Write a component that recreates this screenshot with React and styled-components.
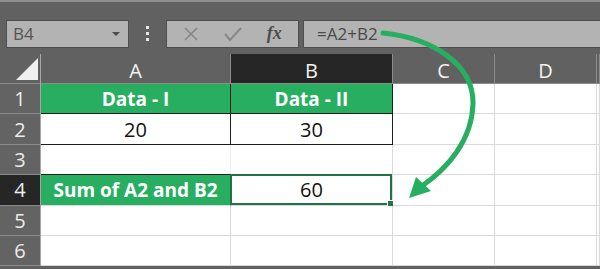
import React from 'react';
import styled, { createGlobalStyle } from 'styled-components';

const GlobalStyle = createGlobalStyle`
  html, body {
    margin: 0;
    padding: 0;
    background: #616161;
  }
  body {
    font-family: "Open Sans", "Noto Sans", sans-serif;
    overflow: hidden;
  }
`;

const Page = styled.div`
  position: relative;
  width: 600px;
  height: 269px;
  overflow: hidden;
  background: #616161;
  border-top: 2px solid #8f8f8f;
  box-sizing: border-box;
`;

const Toolbar = styled.div`
  display: flex;
  align-items: center;
  height: 52px;
  padding: 11px 0 0 6px;
  box-sizing: border-box;
`;

const Box = styled.div`
  display: flex;
  align-items: center;
  height: 28px;
  box-sizing: border-box;
  background: #b3b3b3;
  border: 1px solid #4e4e4e;
  color: #555;
`;

const NameBox = styled(Box)`
  width: 123px;
  padding: 0 8px 0 6px;
  justify-content: space-between;
  font-size: 17px;
`;

const Caret = styled.span`
  width: 0;
  height: 0;
  border-left: 4px solid transparent;
  border-right: 4px solid transparent;
  border-top: 4px solid #4a4a4a;
`;

const Dots = styled.div`
  display: flex;
  flex-direction: column;
  gap: 3px;
  margin: 0 17px 0 17px;
  span {
    width: 3px;
    height: 3px;
    background: #e6e6e6;
  }
`;

const FxBox = styled(Box)`
  width: 133px;
  justify-content: space-around;
  padding: 0 4px;
`;

const FxText = styled.span`
  font-family: "Liberation Serif", serif;
  font-style: italic;
  font-weight: bold;
  font-size: 18px;
  color: #4d4d4d;
`;

const FormulaBox = styled(Box)`
  flex: 1;
  margin-left: 4px;
  padding-left: 13px;
  font-size: 17px;
  color: #4a4a4a;
  border-right: none;
`;

const Grid = styled.div`
  display: grid;
  grid-template-columns: 41px 190px 162px 102px 102px 1fr;
  grid-template-rows: 30px repeat(6, 30.4px);
`;

const ColHead = styled.div`
  display: flex;
  align-items: center;
  justify-content: center;
  box-sizing: border-box;
  background: ${({ $active }) => ($active ? '#262626' : '#616161')};
  border-right: 1px solid #8c8c8c;
  border-bottom: 1px solid #8c8c8c;
  color: #f2f2f2;
  font-size: 20px;
  padding-top: 4px;
`;

const Corner = styled(ColHead)`
  position: relative;
  border-right: 1px solid #a6a6a6;
  svg {
    position: absolute;
    left: 16px;
    bottom: 3px;
  }
`;

const RowHead = styled.div`
  display: flex;
  align-items: center;
  justify-content: center;
  box-sizing: border-box;
  background: ${({ $active }) => ($active ? '#262626' : '#636363')};
  border-right: 1px solid #a6a6a6;
  border-bottom: 1px solid #8c8c8c;
  color: #ececec;
  font-size: 20px;
`;

const Cell = styled.div`
  position: relative;
  display: flex;
  align-items: center;
  justify-content: center;
  box-sizing: border-box;
  background: ${({ $green }) => ($green ? '#28ae61' : '#ffffff')};
  color: ${({ $green }) => ($green ? '#ffffff' : '#111')};
  font-weight: ${({ $green }) => ($green ? 700 : 400)};
  font-size: ${({ $green }) => ($green ? '19px' : '20px')};
  border-right: 1px solid ${({ $right }) => $right || '#dadada'};
  border-bottom: 1px solid ${({ $bottom }) => $bottom || '#dadada'};
`;

const Selection = styled.div`
  position: absolute;
  inset: -1px 0 0 -1px;
  border: 2px solid #217346;
  pointer-events: none;
  &::after {
    content: '';
    position: absolute;
    right: -5px;
    bottom: -5px;
    width: 6px;
    height: 6px;
    background: #217346;
    border: 1px solid #fff;
  }
`;

const ArrowLayer = styled.svg`
  position: absolute;
  left: 0;
  top: 0;
  pointer-events: none;
`;

const cols = ['A', 'B', 'C', 'D', ''];

const dark = '#1d1d1d';

const rows = [
  [
    { text: 'Data - I', green: true, right: dark, bottom: dark },
    { text: 'Data - II', green: true, right: dark, bottom: dark },
  ],
  [
    { text: '20', right: dark, bottom: dark },
    { text: '30', right: dark, bottom: dark },
  ],
  [
    { text: '', right: '#eeeeee', bottom: dark },
    { text: '', right: '#dadada', bottom: '#dadada' },
  ],
  [
    { text: 'Sum of A2 and B2', green: true, right: '#1f6b3d', bottom: '#dadada' },
    { text: '60', selected: true },
  ],
  [{ text: '' }, { text: '' }],
  [{ text: '' }, { text: '' }],
];

const App = () => (
  <Page>
    <GlobalStyle />
    <Toolbar>
      <NameBox>
        B4
        <Caret />
      </NameBox>
      <Dots>
        <span />
        <span />
        <span />
      </Dots>
      <FxBox>
        <svg width="16" height="16" viewBox="0 0 16 16">
          <path d="M2 2 L14 14 M14 2 L2 14" stroke="#878787" strokeWidth="1.6" fill="none" />
        </svg>
        <svg width="18" height="16" viewBox="0 0 18 16">
          <path d="M1 8 L6 14 L17 2" stroke="#878787" strokeWidth="2" fill="none" />
        </svg>
        <FxText>fx</FxText>
      </FxBox>
      <FormulaBox>=A2+B2</FormulaBox>
    </Toolbar>
    <Grid>
      <Corner>
        <svg width="22" height="22" viewBox="0 0 22 22">
          <polygon points="22,0 22,22 0,22" fill="#f0f0f0" />
        </svg>
      </Corner>
      {cols.map((c, i) => (
        <ColHead key={i} $active={c === 'B'}>
          {c}
        </ColHead>
      ))}
      {rows.map((r, ri) => (
        <React.Fragment key={ri}>
          <RowHead $active={ri === 3}>{ri + 1}</RowHead>
          {r.map((cell, ci) => (
            <Cell key={ci} $green={cell.green} $right={cell.right} $bottom={cell.bottom}>
              {cell.text}
              {cell.selected && <Selection />}
            </Cell>
          ))}
          <Cell />
          <Cell />
          <Cell />
        </React.Fragment>
      ))}
    </Grid>
    <ArrowLayer width="600" height="269" viewBox="0 0 600 269">
      <path
        d="M383 31 C 432 36, 474 62, 473 102 C 472 138, 448 166, 422 184"
        stroke="#27ae60"
        strokeWidth="5"
        fill="none"
        strokeLinecap="round"
      />
      <polygon points="409,196 416,175 431,189" fill="#27ae60" />
    </ArrowLayer>
  </Page>
);

export default App;
